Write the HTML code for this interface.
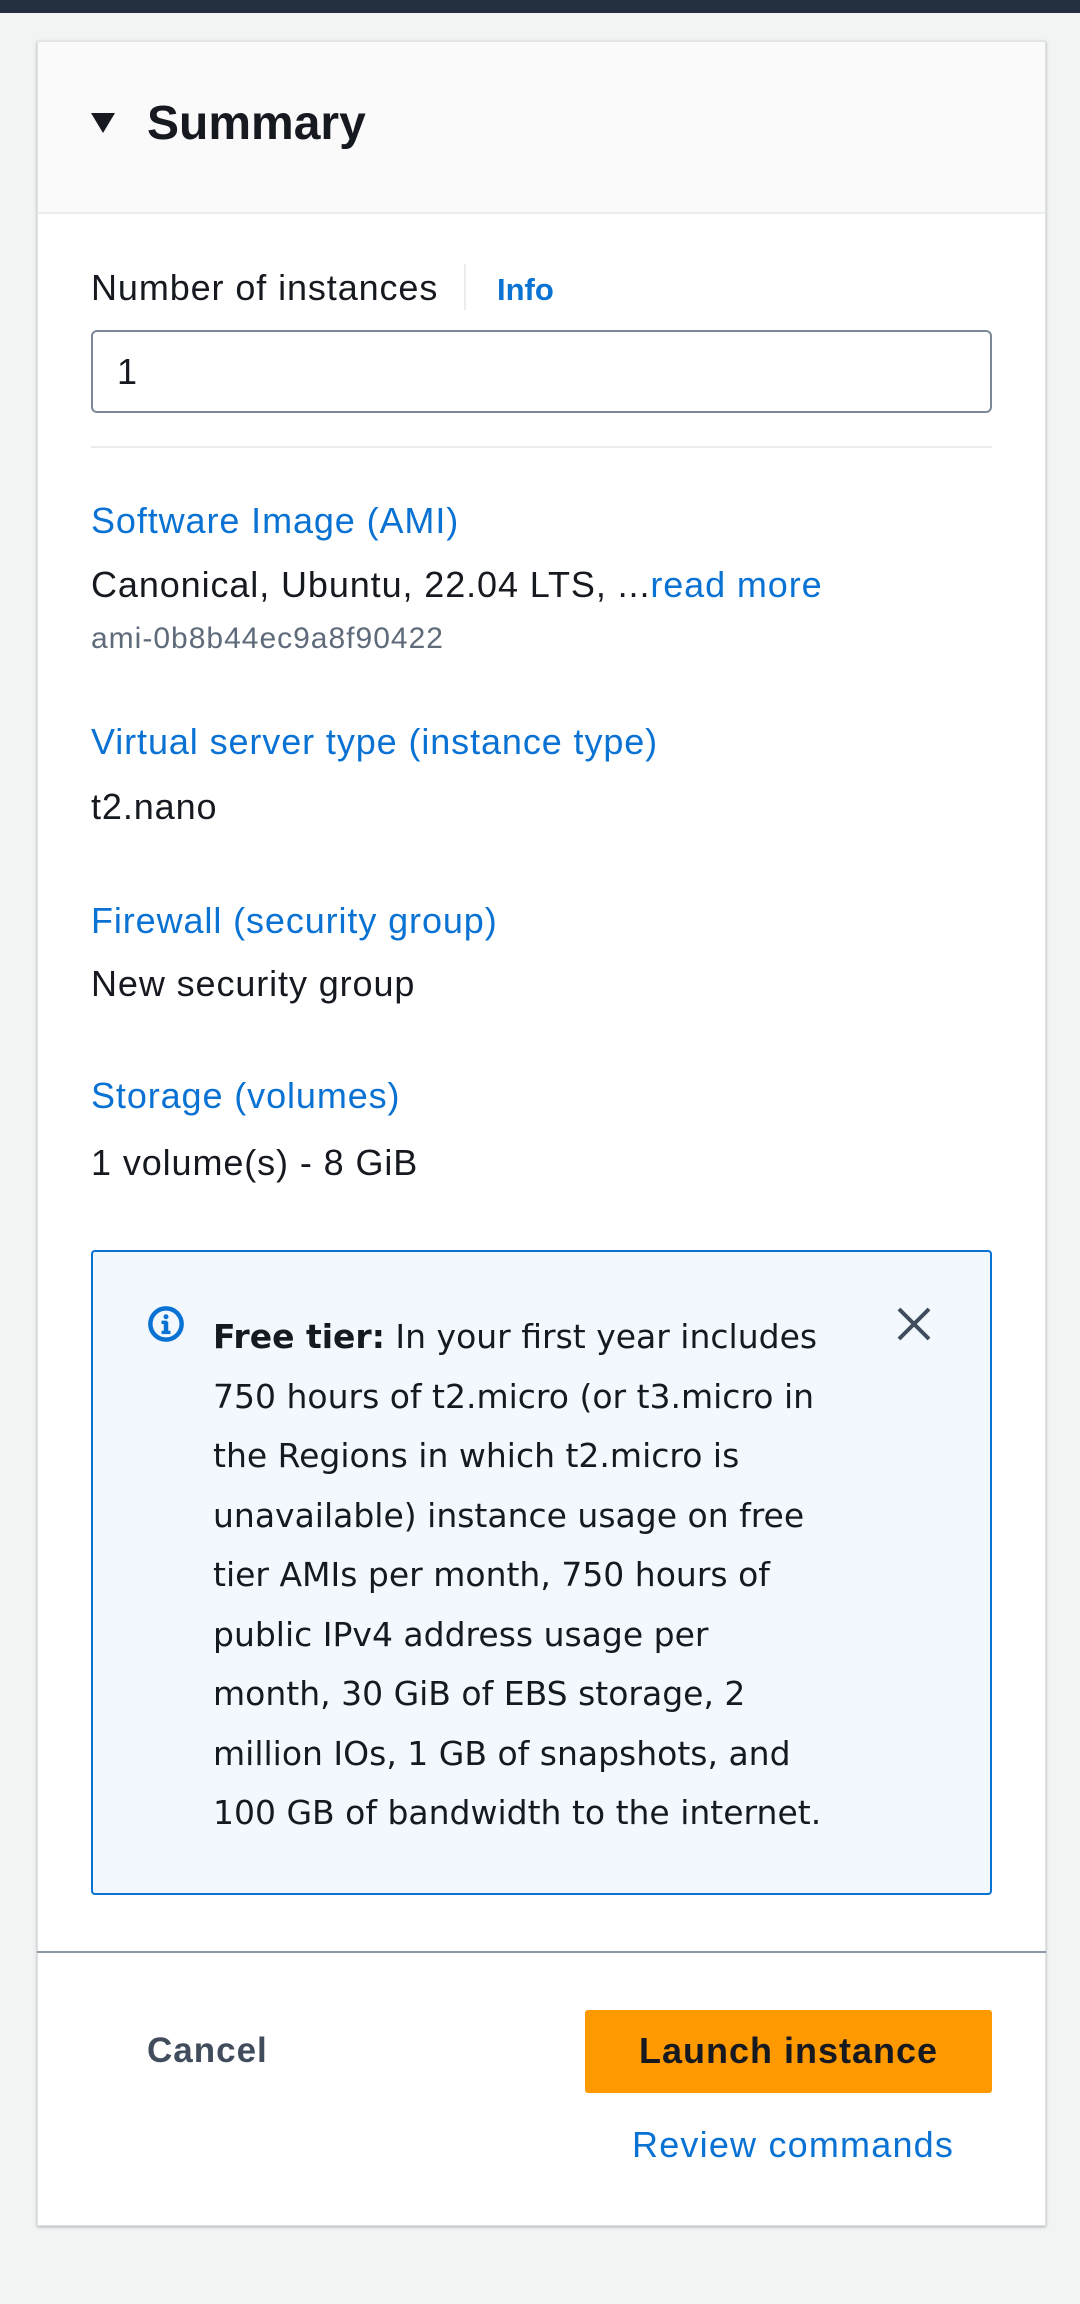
<!DOCTYPE html>
<html><head><meta charset="utf-8"><style>
*{margin:0;padding:0;box-sizing:border-box}
body{width:1080px;height:2304px;background:#f2f3f3;font-family:"Liberation Sans",sans-serif;position:relative;overflow:hidden;color:#16191f}
.bar{position:absolute;left:0;top:0;width:1080px;height:13px;background:#232f3e}
.card{position:absolute;left:37px;top:41px;width:1009px;height:2185px;background:#fff;box-shadow:0 1px 3px rgba(0,28,36,.3);border:1px solid #e0e3e6}
.hdr{position:absolute;left:0;top:0;width:100%;height:172px;background:#fafafa;border-bottom:2px solid #eaeded}
.t{position:absolute;white-space:nowrap;line-height:1}
.m{font-size:36px;letter-spacing:0.9px}
.blue{color:#0972d3}
</style></head><body>
<div class="bar"></div>
<div class="card">
<div class="hdr"></div>
</div>
<svg style="position:absolute;left:91px;top:113px" width="24" height="20"><polygon points="0,0 24,0 12,20" fill="#16191f"/></svg>
<div class="t" style="left:147px;top:100px;font-size:48px;font-weight:bold">Summary</div>
<div class="t m" style="left:91px;top:270px">Number of instances</div>
<div style="position:absolute;left:464px;top:264px;width:2px;height:46px;background:#e9ebed"></div>
<div class="t blue" style="left:497px;top:274px;font-size:31px;font-weight:bold">Info</div>
<div style="position:absolute;left:91px;top:330px;width:901px;height:83px;border:2px solid #7d8998;border-radius:6px"></div>
<div class="t m" style="left:117px;top:354px">1</div>
<div style="position:absolute;left:91px;top:446px;width:901px;height:2px;background:#e9ebed"></div>
<div class="t blue m" style="left:91px;top:503px">Software Image (AMI)</div>
<div class="t m" style="left:91px;top:567px">Canonical, Ubuntu, 22.04 LTS, ...<span class="blue">read more</span></div>
<div class="t" style="left:91px;top:624px;font-size:30px;letter-spacing:1px;color:#5f6b7a">ami-0b8b44ec9a8f90422</div>
<div class="t blue m" style="left:91px;top:724px">Virtual server type (instance type)</div>
<div class="t m" style="left:91px;top:789px">t2.nano</div>
<div class="t blue m" style="left:91px;top:903px">Firewall (security group)</div>
<div class="t m" style="left:91px;top:966px">New security group</div>
<div class="t blue m" style="left:91px;top:1078px">Storage (volumes)</div>
<div class="t m" style="left:91px;top:1145px">1 volume(s) - 8 GiB</div>
<div style="position:absolute;left:91px;top:1250px;width:901px;height:645px;background:#f2f8fd;border:2px solid #0972d3;border-radius:4px"></div>
<svg style="position:absolute;left:147px;top:1305px" width="38" height="38" viewBox="0 0 34 34"><circle cx="17" cy="17" r="14" fill="none" stroke="#0972d3" stroke-width="4"/><rect x="15" y="15" width="4" height="10" fill="#0972d3"/><rect x="13" y="14" width="5" height="3" fill="#0972d3"/><rect x="13" y="23" width="8" height="3" fill="#0972d3"/><circle cx="17" cy="10.5" r="2.2" fill="#0972d3"/></svg>
<svg style="position:absolute;left:896px;top:1306px" width="36" height="36"><path d="M3 3L33 33M33 3L3 33" stroke="#414d5c" stroke-width="4"/></svg>
<div style="position:absolute;left:213px;top:1307px;white-space:nowrap;font-family:'DejaVu Sans',sans-serif;font-size:33px;line-height:59.5px;color:#16191f"><b>Free tier:</b> In your first year includes<br>750 hours of t2.micro (or t3.micro in<br>the Regions in which t2.micro is<br>unavailable) instance usage on free<br>tier AMIs per month, 750 hours of<br>public IPv4 address usage per<br>month, 30 GiB of EBS storage, 2<br>million IOs, 1 GB of snapshots, and<br>100 GB of bandwidth to the internet.</div>
<div style="position:absolute;left:37px;top:1951px;width:1009px;height:2px;background:#8d99a8"></div>
<div class="t" style="left:147px;top:2033px;font-size:35px;letter-spacing:1px;font-weight:bold;color:#414d5c">Cancel</div>
<div style="position:absolute;left:585px;top:2010px;width:407px;height:83px;background:#ff9900;border-radius:3px"></div>
<div class="t" style="left:585px;width:407px;text-align:center;top:2033px;font-size:36px;letter-spacing:1px;font-weight:bold">Launch instance</div>
<div class="t blue" style="left:632px;top:2127px;font-size:36px;letter-spacing:1.2px">Review commands</div>
</body></html>
